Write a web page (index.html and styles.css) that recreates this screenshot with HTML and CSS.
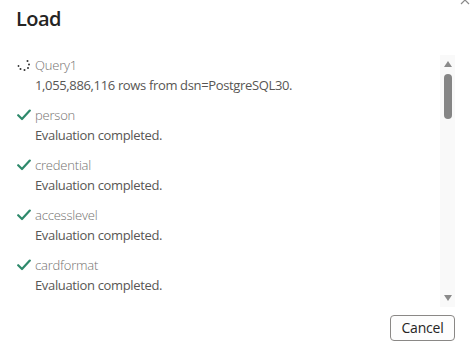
FILE: index.html
```html
<!DOCTYPE html>
<html>
<head>
<meta charset="utf-8">
<link rel="stylesheet" href="styles.css">
</head>
<body>
<div class="dialog">
  <svg class="close" width="10" height="10" viewBox="0 0 10 10"><path d="M1 1L9 9M9 1L1 9" stroke="#8a8a8a" stroke-width="1.2" fill="none"/></svg>
  <h1 class="title">Load</h1>
  <div class="body">
    <div class="list">
      <div class="item">
        <div class="head">
          <svg class="icon" width="14" height="14" viewBox="0 0 14 14">
            <circle cx="10.5" cy="3" r="1" fill="#333"/>
            <circle cx="12" cy="6.5" r="1" fill="#333"/>
            <circle cx="11" cy="10" r="1" fill="#333"/>
            <circle cx="7.5" cy="12" r="1" fill="#333"/>
            <circle cx="3.5" cy="11" r="1" fill="#333"/>
            <circle cx="1.5" cy="8" r="0.9" fill="#333"/>
          </svg>
          <span class="name">Query1</span>
        </div>
        <div class="status">1,055,886,116 rows from dsn=PostgreSQL30.</div>
      </div>
      <div class="item">
        <div class="head">
          <svg class="icon" width="14" height="14" viewBox="0 0 14 14"><path d="M1.2 7.2L5 11L12.8 2.6" stroke="#2f8a6c" stroke-width="2.2" fill="none" stroke-linecap="round" stroke-linejoin="round"/></svg>
          <span class="name">person</span>
        </div>
        <div class="status">Evaluation completed.</div>
      </div>
      <div class="item">
        <div class="head">
          <svg class="icon" width="14" height="14" viewBox="0 0 14 14"><path d="M1.2 7.2L5 11L12.8 2.6" stroke="#2f8a6c" stroke-width="2.2" fill="none" stroke-linecap="round" stroke-linejoin="round"/></svg>
          <span class="name">credential</span>
        </div>
        <div class="status">Evaluation completed.</div>
      </div>
      <div class="item">
        <div class="head">
          <svg class="icon" width="14" height="14" viewBox="0 0 14 14"><path d="M1.2 7.2L5 11L12.8 2.6" stroke="#2f8a6c" stroke-width="2.2" fill="none" stroke-linecap="round" stroke-linejoin="round"/></svg>
          <span class="name">accesslevel</span>
        </div>
        <div class="status">Evaluation completed.</div>
      </div>
      <div class="item">
        <div class="head">
          <svg class="icon" width="14" height="14" viewBox="0 0 14 14"><path d="M1.2 7.2L5 11L12.8 2.6" stroke="#2f8a6c" stroke-width="2.2" fill="none" stroke-linecap="round" stroke-linejoin="round"/></svg>
          <span class="name">cardformat</span>
        </div>
        <div class="status">Evaluation completed.</div>
      </div>
    </div>
    <div class="scrollbar">
      <svg class="arrow" width="8" height="6" viewBox="0 0 8 6"><path d="M4 0L8 6H0Z" fill="#8a8a8a"/></svg>
      <div class="track"><div class="thumb"></div></div>
      <svg class="arrow" width="8" height="6" viewBox="0 0 8 6"><path d="M0 0H8L4 6Z" fill="#8a8a8a"/></svg>
    </div>
  </div>
  <div class="footer">
    <button class="btn">Cancel</button>
  </div>
</div>
</body>
</html>
```

FILE: styles.css
```css
html, body {
  margin: 0;
  padding: 0;
  background: #ffffff;
}
body {
  font-family: "Open Sans", "Noto Sans", sans-serif;
  width: 474px;
  height: 353px;
  overflow: hidden;
}
.dialog {
  position: relative;
  width: 474px;
  height: 353px;
  box-sizing: border-box;
  padding: 0 19px 12px 16px;
  display: flex;
  flex-direction: column;
}
.close {
  position: absolute;
  right: 4px;
  top: -5px;
}
.title {
  margin: 0;
  padding-top: 5px;
  font-size: 20px;
  font-weight: 600;
  letter-spacing: -0.6px;
  line-height: 28px;
  color: #252423;
  height: 28px;
}
.body {
  display: flex;
  margin-top: 22px;
  height: 252px;
}
.list {
  flex: 1;
  overflow: hidden;
}
.item {
  margin-bottom: 10px;
}
.head {
  display: flex;
  align-items: center;
  height: 20px;
}
.icon {
  width: 14px;
  height: 14px;
  margin-left: 1px;
  margin-right: 4px;
  flex: none;
}
.name {
  font-size: 13px;
  font-weight: 300;
  letter-spacing: -0.2px;
  color: #747270;
  line-height: 20px;
}
.status {
  padding-left: 19px;
  font-size: 13px;
  letter-spacing: -0.35px;
  color: #585654;
  line-height: 20px;
}
.scrollbar {
  width: 15px;
  background: #f9f9f9;
  display: flex;
  flex-direction: column;
  align-items: center;
  padding: 6px 0 6px;
  box-sizing: border-box;
}
.arrow {
  flex: none;
}
.track {
  flex: 1;
  width: 100%;
  display: flex;
  justify-content: center;
  padding-top: 7px;
}
.thumb {
  width: 8px;
  height: 45px;
  border-radius: 4px;
  background: #858585;
}
.footer {
  display: flex;
  justify-content: flex-end;
  margin-top: auto;
}
.btn {
  font-family: "Open Sans", "Noto Sans", sans-serif;
  font-size: 14px;
  letter-spacing: -0.2px;
  color: #252423;
  background: #fdfdfd;
  border: 1px solid #8a8886;
  border-radius: 4px;
  width: 65px;
  height: 26px;
  padding: 0;
  line-height: 22px;
}
```
